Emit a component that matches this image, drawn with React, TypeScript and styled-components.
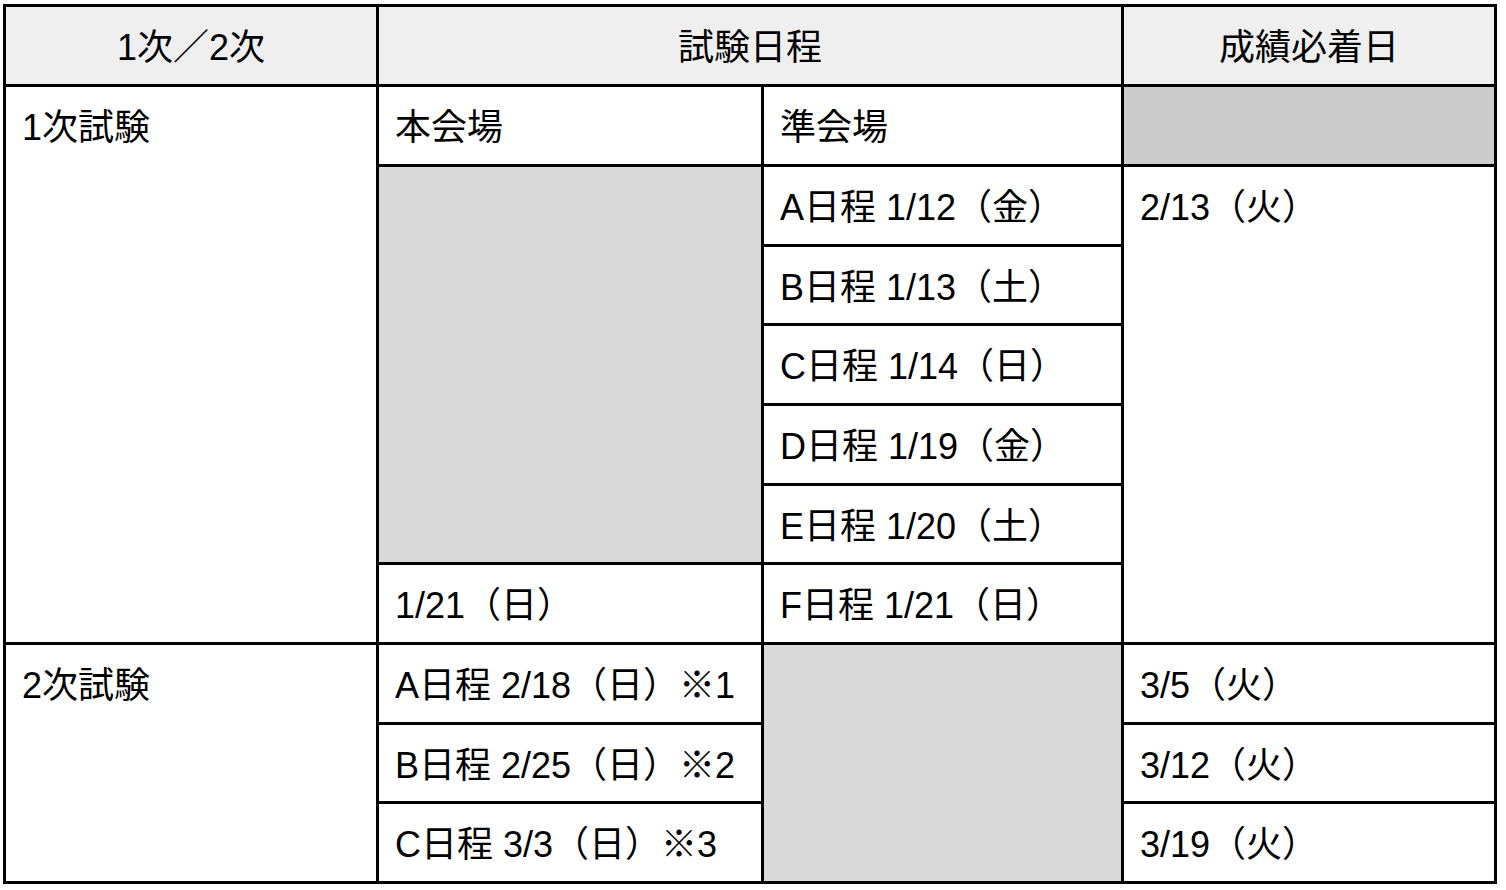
import * as React from 'react';
import styled, { createGlobalStyle } from 'styled-components';

const GlobalStyle = createGlobalStyle`
  body {
    margin: 0;
    background: #fff;
    font-family: 'Liberation Sans', 'Noto Sans CJK JP', sans-serif;
    color: #000;
  }
`;

const Page = styled.div`
  padding: 4px 0 0 3px;
`;

const Table = styled.table`
  width: 1494px;
  table-layout: fixed;
  border-collapse: separate;
  border-spacing: 0;
  border-left: 3px solid #000;
  border-top: 3px solid #000;
  font-size: 36px;
`;

const Col = styled.col<{ $w: number }>`
  width: ${p => p.$w}px;
`;

const Row = styled.tr<{ $tall?: boolean }>`
  height: ${p => (p.$tall ? '80px' : '79.67px')};
`;

const HeadCell = styled.th`
  box-sizing: border-box;
  background: #efefef;
  border-right: 3px solid #000;
  border-bottom: 3px solid #000;
  font-weight: normal;
  text-align: center;
  vertical-align: middle;
  line-height: 42px;
  padding: 4px 16px 0;
`;

type Shade = 'none' | 'light' | 'dark';

const shades: Record<Shade, string> = {
  none: '#fff',
  light: '#d9d9d9',
  dark: '#cccccc',
};

const Cell = styled.td<{ $shade?: Shade }>`
  box-sizing: border-box;
  background: ${p => shades[p.$shade || 'none']};
  border-right: 3px solid #000;
  border-bottom: 3px solid #000;
  vertical-align: top;
  text-align: left;
  line-height: 42px;
  padding: 20px 16px 0;
  white-space: nowrap;
`;

export default function App() {
  return (
    <Page>
      <GlobalStyle />
      <Table>
        <colgroup>
          <Col $w={373} />
          <Col $w={385} />
          <Col $w={360} />
          <Col $w={373} />
        </colgroup>
        <thead>
          <Row $tall>
            <HeadCell>1次／2次</HeadCell>
            <HeadCell colSpan={2}>試験日程</HeadCell>
            <HeadCell>成績必着日</HeadCell>
          </Row>
        </thead>
        <tbody>
          <Row $tall>
            <Cell rowSpan={7}>1次試験</Cell>
            <Cell>本会場</Cell>
            <Cell>準会場</Cell>
            <Cell $shade="dark" />
          </Row>
          <Row>
            <Cell rowSpan={5} $shade="light" />
            <Cell>A日程 1/12（金）</Cell>
            <Cell rowSpan={6}>2/13（火）</Cell>
          </Row>
          <Row>
            <Cell>B日程 1/13（土）</Cell>
          </Row>
          <Row>
            <Cell>C日程 1/14（日）</Cell>
          </Row>
          <Row>
            <Cell>D日程 1/19（金）</Cell>
          </Row>
          <Row>
            <Cell>E日程 1/20（土）</Cell>
          </Row>
          <Row>
            <Cell>1/21（日）</Cell>
            <Cell>F日程 1/21（日）</Cell>
          </Row>
          <Row>
            <Cell rowSpan={3}>2次試験</Cell>
            <Cell>A日程 2/18（日）※1</Cell>
            <Cell rowSpan={3} $shade="light" />
            <Cell>3/5（火）</Cell>
          </Row>
          <Row>
            <Cell>B日程 2/25（日）※2</Cell>
            <Cell>3/12（火）</Cell>
          </Row>
          <Row>
            <Cell>C日程 3/3（日）※3</Cell>
            <Cell>3/19（火）</Cell>
          </Row>
        </tbody>
      </Table>
    </Page>
  );
}
